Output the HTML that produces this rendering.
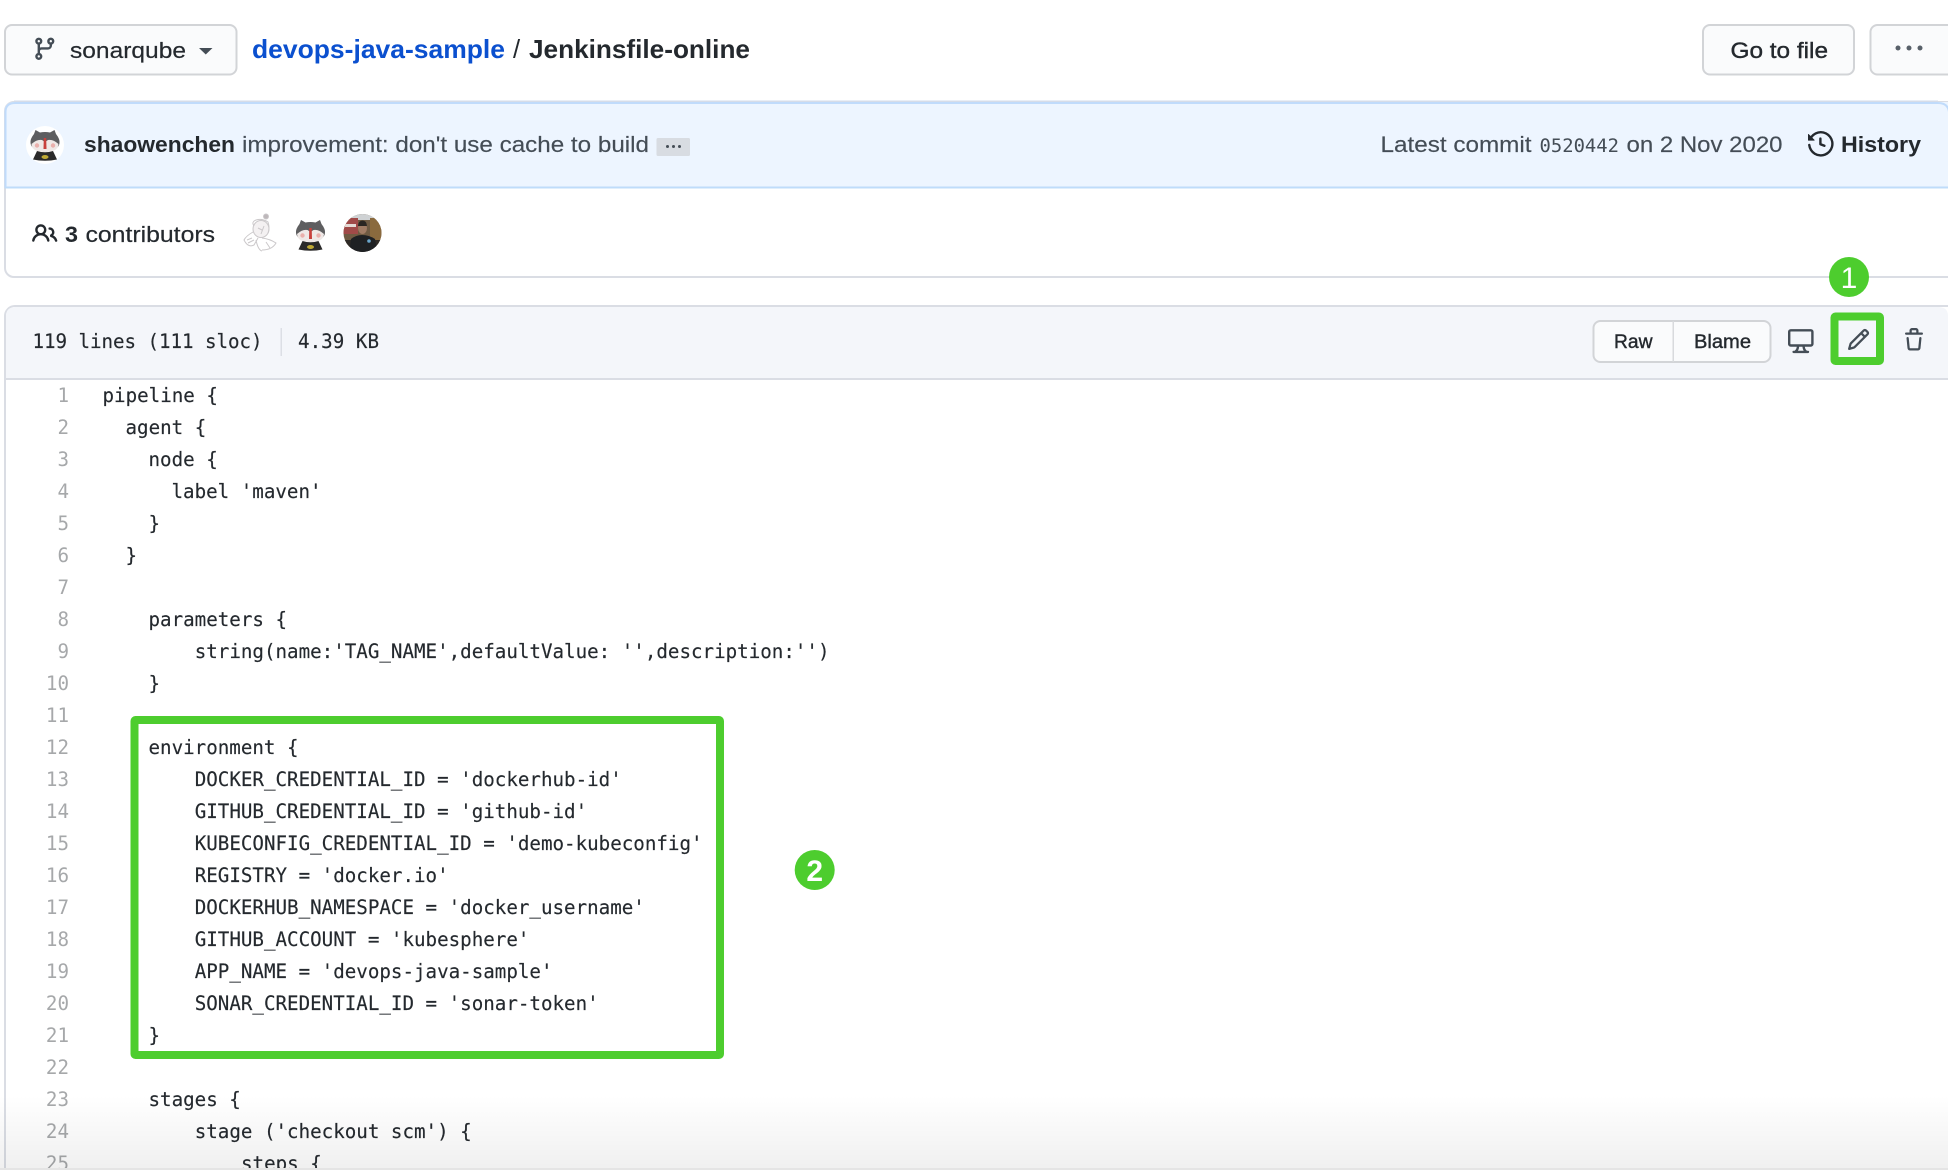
<!DOCTYPE html>
<html lang="en">
<head>
<meta charset="utf-8">
<title>devops-java-sample / Jenkinsfile-online</title>
<style>
html,body{margin:0;padding:0;background:#fff;width:1948px;height:1170px;overflow:hidden}
svg{display:block}
.s{font-family:"Liberation Sans",Arial,sans-serif}
.m{font-family:"DejaVu Sans Mono","Liberation Mono",monospace;font-size:19.180px;fill:#24292e;stroke:#24292e;stroke-width:.15px;white-space:pre}
.n{font-family:"DejaVu Sans Mono","Liberation Mono",monospace;font-size:19.180px;fill:#a6a8aa;text-anchor:end}
</style>
</head>
<body>
<svg xmlns="http://www.w3.org/2000/svg" width="1948" height="1170" viewBox="0 0 1948 1170">
<defs>
<linearGradient id="fade" x1="0" y1="0" x2="0" y2="1">
<stop offset="0" stop-color="#000" stop-opacity="0"/>
<stop offset="1" stop-color="#000" stop-opacity=".06"/>
</linearGradient>
<clipPath id="av3"><circle cx="362.5" cy="233" r="19"/></clipPath>
<g id="cat">
<path d="M-11 -11 L-9.500 -15 L-5 -12.500 Q0 -13.500 5 -12.500 L9.500 -15 L11 -11 Q15 -6 14.500 -2 Q14 5 0 7 Q-14 5 -14.500 -2 Q-15 -6 -11 -11Z" fill="#5e5e60"/>
<path d="M-13.500 -1 Q-8 -6 -3 -5 L0 -3 L3 -5 Q8 -6 13.500 -1 Q13 4 9 5.500 Q5 7 0 7 Q-5 7 -9 5.500 Q-13 4 -13.500 -1Z" fill="#efe8e6"/>
<path d="M-1.200 -7 L1.200 -7 L1.500 4 L-1.500 4Z" fill="#c8403c"/>
<circle cx="-8" cy="0.500" r="2.200" fill="#eab0ac"/>
<circle cx="8" cy="0.500" r="2.200" fill="#eab0ac"/>
<path d="M-8 6 Q0 8.500 8 6 L12 14.500 Q0 17 -12 14.500Z" fill="#2b2a2a"/>
<ellipse cx="0" cy="12" rx="3.500" ry="2" fill="#bfa935"/>
</g>
</defs>

<!-- top bar -->
<rect x="5" y="25" width="231.500" height="49.500" rx="7" fill="#fafbfc" stroke="#d2d4d7" stroke-width="2"/>
<g transform="translate(32 36) scale(1.6)" fill="#444d56"><path fill-rule="evenodd" d="M11.750 2.500a.75.75 0 100 1.500.75.75 0 000-1.500zm-2.250.75a2.250 2.250 0 113 2.122V6A2.500 2.500 0 0110 8.500H6a1 1 0 00-1 1v1.128a2.251 2.251 0 11-1.500 0V5.372a2.250 2.250 0 111.500 0v1.836A2.492 2.492 0 016 7h4a1 1 0 001-1v-.628A2.250 2.250 0 019.500 3.250zM4.250 12a.75.75 0 100 1.500.75.75 0 000-1.500zM3.500 3.250a.75.75 0 111.500 0 .75.75 0 01-1.500 0z"/></g>
<text class="s" x="70" y="58" font-size="22.400" fill="#24292e" textLength="116" lengthAdjust="spacingAndGlyphs" stroke="#24292e" stroke-width=".2">sonarqube</text>
<path d="M199 48h13.500l-6.750 6.500z" fill="#444d56"/>
<text class="s" x="252" y="58" font-size="25.600" font-weight="700" fill="#0b50cf" textLength="253" lengthAdjust="spacingAndGlyphs">devops-java-sample</text>
<text class="s" x="513" y="58" font-size="25.600" fill="#24292e">/</text>
<text class="s" x="529" y="58" font-size="25.600" font-weight="700" fill="#24292e" textLength="221" lengthAdjust="spacingAndGlyphs">Jenkinsfile-online</text>

<rect x="1703" y="25" width="151" height="49.500" rx="7" fill="#fafbfc" stroke="#d2d4d7" stroke-width="2"/>
<text class="s" x="1730.500" y="58" font-size="22.400" fill="#24292e" textLength="97.500" lengthAdjust="spacingAndGlyphs" stroke="#24292e" stroke-width=".4">Go to file</text>
<rect x="1870.500" y="25" width="100" height="49.500" rx="7" fill="#fafbfc" stroke="#d2d4d7" stroke-width="2"/>
<circle cx="1898" cy="48" r="2.500" fill="#586069"/><circle cx="1909" cy="48" r="2.500" fill="#586069"/><circle cx="1920" cy="48" r="2.500" fill="#586069"/>

<!-- commit box -->
<rect x="5" y="102" width="1980" height="175" rx="9" fill="#fff" stroke="#dadde4" stroke-width="2"/>
<path d="M4.500 188 V112 Q4.500 102 15 102 H1948 V188Z" fill="#edf5ff"/>
<path d="M5.500 188 V112 Q5.500 103 15 103 H1938 Q1948 103 1949 112" fill="none" stroke="#c0dbfb" stroke-width="2"/>
<path d="M14 101 H1938" stroke="#d3dcec" stroke-width="1"/>
<path d="M5 187.500 H1948" stroke="#bfdcfa" stroke-width="2"/>

<circle cx="45" cy="145" r="19" fill="#fff"/>
<use href="#cat" x="45" y="145"/>
<text class="s" x="84" y="152" font-size="22.400" font-weight="700" fill="#24292e" textLength="151" lengthAdjust="spacingAndGlyphs">shaowenchen</text>
<text class="s" x="242" y="152" font-size="22.400" fill="#444d56" textLength="407" lengthAdjust="spacingAndGlyphs" stroke="#444d56" stroke-width=".15">improvement: don't use cache to build</text>
<rect x="656.500" y="138" width="33.500" height="18" rx="1.500" fill="#d8dce2"/>
<circle cx="667.500" cy="146.500" r="1.500" fill="#444d56"/><circle cx="673.500" cy="146.500" r="1.500" fill="#444d56"/><circle cx="679.500" cy="146.500" r="1.500" fill="#444d56"/>

<text class="s" x="1380.500" y="152" font-size="22.400" fill="#444d56" textLength="151" lengthAdjust="spacingAndGlyphs" stroke="#444d56" stroke-width=".15">Latest commit</text>
<text x="1539.500" y="152" font-family="'DejaVu Sans Mono','Liberation Mono',monospace" font-size="19" fill="#444d56" textLength="79.500" lengthAdjust="spacingAndGlyphs">0520442</text>
<text class="s" x="1626.500" y="152" font-size="22.400" fill="#444d56" textLength="156" lengthAdjust="spacingAndGlyphs" stroke="#444d56" stroke-width=".15">on 2 Nov 2020</text>
<g transform="translate(1808 131) scale(1.6)" fill="#24292e"><path fill-rule="evenodd" d="M1.643 3.143L.427 1.927A.25.25 0 000 2.104V5.750c0 .138.112.25.25.25h3.646a.25.25 0 00.177-.427L2.715 4.215a6.500 6.500 0 11-1.180 4.458.75.75 0 10-1.493.154 8.001 8.001 0 101.600-5.684zM7.750 4a.75.75 0 01.75.75v2.992l2.028.812a.75.75 0 01-.557 1.392l-2.500-1A.75.75 0 017 8.250v-3.500A.75.75 0 017.750 4z"/></g>
<text class="s" x="1841" y="152" font-size="22.400" font-weight="700" fill="#24292e" textLength="80" lengthAdjust="spacingAndGlyphs">History</text>

<!-- contributors -->
<g transform="translate(32 221) scale(1.6)" fill="#24292e"><path fill-rule="evenodd" d="M5.500 3.500a2 2 0 100 4 2 2 0 000-4zM2 5.500a3.500 3.500 0 115.898 2.549 5.507 5.507 0 013.034 4.084.75.75 0 11-1.482.235 4.001 4.001 0 00-7.900 0 .75.75 0 01-1.482-.236A5.507 5.507 0 013.102 8.050 3.490 3.490 0 012 5.500zM11 4a.75.75 0 100 1.500 1.500 1.500 0 01.666 2.844.75.75 0 00-.416.672v.352a.75.75 0 00.574.73c1.200.289 2.162 1.200 2.522 2.372a.75.75 0 101.434-.44 5.010 5.010 0 00-2.560-3.012A3 3 0 0011 4z"/></g>
<text class="s" x="65" y="242" font-size="22.400" font-weight="700" fill="#24292e" textLength="13" lengthAdjust="spacingAndGlyphs">3</text>
<text class="s" x="85.500" y="242" font-size="22.400" fill="#24292e" textLength="129.500" lengthAdjust="spacingAndGlyphs" stroke="#24292e" stroke-width=".2">contributors</text>

<g fill="none" stroke="#cbc8ca" stroke-width="1">
<ellipse cx="261" cy="229" rx="8" ry="8.500" fill="#f4f1f2"/>
<circle cx="266" cy="216.500" r="2.500" fill="#bdb7ba"/>
<path d="M254 226 Q251 222 256 220 Q262 218 268 222 Q270 228 268 233 M253 232 Q246 236 244 240 Q248 248 254 245 L258 238 M256 240 Q258 250 262 251 M262 238 Q270 239 276 243 Q272 250 262 250 M258 228 L262 230 M264 226 L261 234 M247 240 L252 238 M248 243 L254 240 M266 242 L270 248"/>
</g>

<use href="#cat" x="310.500" y="235"/>

<g clip-path="url(#av3)">
<rect x="343" y="213" width="40" height="40" fill="#6f5a42"/>
<rect x="343" y="214" width="40" height="6" fill="#cfd2d4"/>
<rect x="343" y="218" width="15" height="16" fill="#a04a48"/>
<rect x="345" y="224" width="11" height="3" fill="#e4dad4"/>
<rect x="370" y="218" width="14" height="22" fill="#8a6a3e"/>
<rect x="343" y="240" width="40" height="14" fill="#2e2a26"/>
<path d="M349 254 L351 239 Q356 235 362 235 Q369 235 375 239 L378 254Z" fill="#1e2023"/>
<ellipse cx="362.500" cy="228" rx="4.500" ry="6" fill="#a07b64"/>
<path d="M358 226 Q358.500 220.500 362.500 220.500 Q366.500 220.500 367 226Z" fill="#2a2522"/>
<circle cx="369" cy="241" r="1.800" fill="#6aa6cc"/>
</g>

<!-- file box -->
<rect x="5" y="306" width="1980" height="900" rx="10" fill="#fff" stroke="#dadde4" stroke-width="2"/>
<path d="M6 379 V316 Q6 307 16 307 H1938 Q1948 307 1948 316 V379Z" fill="#f4f6fa"/>
<path d="M5 379 H1948" stroke="#dadde4" stroke-width="2"/>
<text class="m" x="32.500" y="348" textLength="230" lengthAdjust="spacing">119 lines (111 sloc)</text>
<rect x="280.500" y="328" width="1.500" height="28" fill="#dcdfe5"/>
<text class="m" x="298" y="348" textLength="81" lengthAdjust="spacing">4.39 KB</text>

<rect x="1593.500" y="321" width="177" height="41" rx="7" fill="#fafbfc" stroke="#d2d4d7" stroke-width="2"/>
<rect x="1672.500" y="321" width="1.500" height="41" fill="#d8dadd"/>
<text class="s" x="1614" y="348" font-size="19.200" fill="#24292e" textLength="38.500" lengthAdjust="spacingAndGlyphs" stroke="#24292e" stroke-width=".4">Raw</text>
<text class="s" x="1694" y="348" font-size="19.200" fill="#24292e" textLength="57" lengthAdjust="spacingAndGlyphs" stroke="#24292e" stroke-width=".4">Blame</text>

<g transform="translate(1788 327.500) scale(1.6)" fill="#444d56"><path fill-rule="evenodd" d="M1.750 2.500h12.500a.25.25 0 01.25.25v7.500a.25.25 0 01-.25.25H1.750a.25.25 0 01-.25-.25v-7.500a.25.25 0 01.25-.25zM14.250 1H1.750A1.750 1.750 0 000 2.750v7.500C0 11.216.784 12 1.750 12h3.727c-.1 1.041-.52 1.872-1.292 2.500H3.500a.75.75 0 000 1.500h9a.75.75 0 000-1.500h-.685c-.772-.628-1.192-1.459-1.292-2.500h3.727A1.750 1.750 0 0016 10.250v-7.500A1.750 1.750 0 0014.250 1zM9.018 12H6.982a5.720 5.720 0 01-.765 2.500h3.566a5.720 5.720 0 01-.765-2.500z"/></g>

<rect x="1834.500" y="316.500" width="45.500" height="44.500" rx="1" fill="#f4f6fa" stroke="#4dcd2e" stroke-width="8" stroke-linejoin="round"/>
<g transform="translate(1846.500 327.500) scale(1.500)" fill="#444d56"><path fill-rule="evenodd" d="M11.013 1.427a1.750 1.750 0 012.474 0l1.086 1.086a1.750 1.750 0 010 2.474l-8.610 8.610c-.21.21-.47.364-.756.445l-3.251.93a.75.75 0 01-.927-.928l.929-3.250a1.750 1.750 0 01.445-.758l8.610-8.610zm1.414 1.060a.25.25 0 00-.354 0L10.811 3.750l1.439 1.440 1.263-1.263a.25.25 0 000-.354l-1.086-1.086zM11.189 6.250L9.750 4.810l-6.286 6.287a.25.25 0 00-.064.108l-.558 1.953 1.953-.558a.249.249 0 00.108-.064l6.286-6.286z"/></g>
<g transform="translate(1902 328) scale(1.500)" fill="#444d56"><path fill-rule="evenodd" d="M6.500 1.750a.25.25 0 01.25-.25h2.500a.25.25 0 01.25.25V3h-3V1.750zm4.500 0V3h2.250a.75.75 0 010 1.500H2.750a.75.75 0 010-1.500H5V1.750C5 .784 5.784 0 6.750 0h2.500C10.216 0 11 .784 11 1.750zM4.496 6.675a.75.75 0 10-1.492.15l.66 6.600A1.750 1.750 0 005.405 15h5.190c.9 0 1.652-.681 1.741-1.576l.66-6.600a.75.75 0 00-1.492-.149l-.66 6.600a.25.25 0 01-.249.225h-5.190a.25.25 0 01-.249-.225l-.66-6.600z"/></g>

<circle cx="1849" cy="277" r="20" fill="#4dcd2e"/>
<text class="s" x="1849" y="288" font-size="30" fill="#fff" text-anchor="middle">1</text>

<!-- line numbers -->
<text class="n" x="69" y="402">1</text>
<text class="n" x="69" y="434">2</text>
<text class="n" x="69" y="466">3</text>
<text class="n" x="69" y="498">4</text>
<text class="n" x="69" y="530">5</text>
<text class="n" x="69" y="562">6</text>
<text class="n" x="69" y="594">7</text>
<text class="n" x="69" y="626">8</text>
<text class="n" x="69" y="658">9</text>
<text class="n" x="69" y="690">10</text>
<text class="n" x="69" y="722">11</text>
<text class="n" x="69" y="754">12</text>
<text class="n" x="69" y="786">13</text>
<text class="n" x="69" y="818">14</text>
<text class="n" x="69" y="850">15</text>
<text class="n" x="69" y="882">16</text>
<text class="n" x="69" y="914">17</text>
<text class="n" x="69" y="946">18</text>
<text class="n" x="69" y="978">19</text>
<text class="n" x="69" y="1010">20</text>
<text class="n" x="69" y="1042">21</text>
<text class="n" x="69" y="1074">22</text>
<text class="n" x="69" y="1106">23</text>
<text class="n" x="69" y="1138">24</text>
<text class="n" x="69" y="1170">25</text>

<!-- code -->
<text class="m" x="102.500" y="402">pipeline {</text>
<text class="m" x="125.500" y="434">agent {</text>
<text class="m" x="148.500" y="466">node {</text>
<text class="m" x="171.500" y="498">label 'maven'</text>
<text class="m" x="148.500" y="530">}</text>
<text class="m" x="125.500" y="562">}</text>
<text class="m" x="148.500" y="626">parameters {</text>
<text class="m" x="194.700" y="658">string(name:'TAG_NAME',defaultValue: '',description:'')</text>
<text class="m" x="148.500" y="690">}</text>
<text class="m" x="148.500" y="754">environment {</text>
<text class="m" x="194.700" y="786">DOCKER_CREDENTIAL_ID = 'dockerhub-id'</text>
<text class="m" x="194.700" y="818">GITHUB_CREDENTIAL_ID = 'github-id'</text>
<text class="m" x="194.700" y="850">KUBECONFIG_CREDENTIAL_ID = 'demo-kubeconfig'</text>
<text class="m" x="194.700" y="882">REGISTRY = 'docker.io'</text>
<text class="m" x="194.700" y="914">DOCKERHUB_NAMESPACE = 'docker_username'</text>
<text class="m" x="194.700" y="946">GITHUB_ACCOUNT = 'kubesphere'</text>
<text class="m" x="194.700" y="978">APP_NAME = 'devops-java-sample'</text>
<text class="m" x="194.700" y="1010">SONAR_CREDENTIAL_ID = 'sonar-token'</text>
<text class="m" x="148.500" y="1042">}</text>
<text class="m" x="148.500" y="1106">stages {</text>
<text class="m" x="194.700" y="1138">stage ('checkout scm') {</text>
<text class="m" x="241" y="1170">steps {</text>

<!-- annotation 2 -->
<rect x="134.500" y="720" width="585.500" height="335" rx="1" fill="none" stroke="#4dcd2e" stroke-width="8" stroke-linejoin="round"/>
<circle cx="814.700" cy="870" r="20" fill="#4dcd2e"/>
<text class="s" x="814.700" y="881" font-size="30" font-weight="700" fill="#fff" text-anchor="middle">2</text>

<!-- bottom fade -->
<rect x="0" y="1095" width="1948" height="73" fill="url(#fade)"/>
<rect x="0" y="1168" width="1948" height="2" fill="#e4e4e4"/>
</svg>
</body>
</html>
